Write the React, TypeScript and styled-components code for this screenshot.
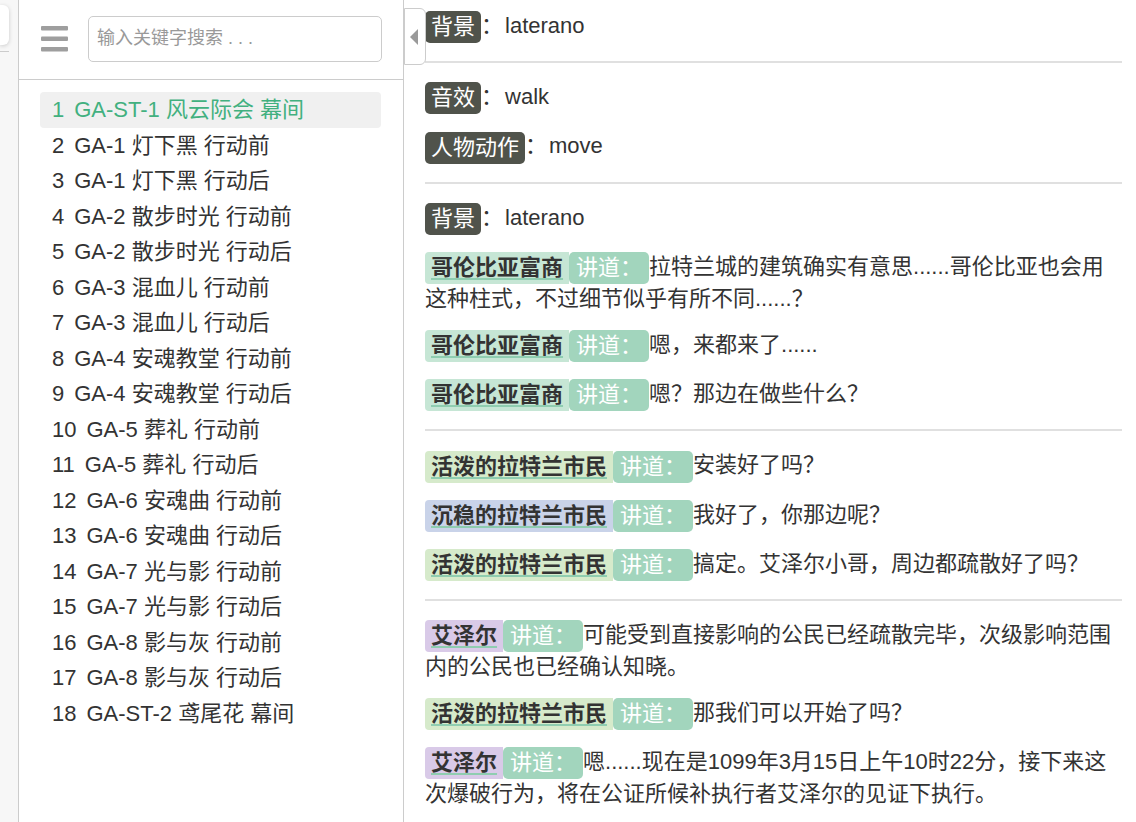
import React from 'react';
import styled, { createGlobalStyle } from 'styled-components';

type Line =
  | { kind: 'meta'; label: string; value: string }
  | { kind: 'talk'; name: string; tone: Tone; text: string };

type Tone = 'mint' | 'lime' | 'blue' | 'purple';

const chapters = [
  'GA-ST-1 风云际会 幕间',
  'GA-1 灯下黑 行动前',
  'GA-1 灯下黑 行动后',
  'GA-2 散步时光 行动前',
  'GA-2 散步时光 行动后',
  'GA-3 混血儿 行动前',
  'GA-3 混血儿 行动后',
  'GA-4 安魂教堂 行动前',
  'GA-4 安魂教堂 行动后',
  'GA-5 葬礼 行动前',
  'GA-5 葬礼 行动后',
  'GA-6 安魂曲 行动前',
  'GA-6 安魂曲 行动后',
  'GA-7 光与影 行动前',
  'GA-7 光与影 行动后',
  'GA-8 影与灰 行动前',
  'GA-8 影与灰 行动后',
  'GA-ST-2 鸢尾花 幕间',
];

const sections: Line[][] = [
  [{ kind: 'meta', label: '背景', value: 'laterano' }],
  [
    { kind: 'meta', label: '音效', value: 'walk' },
    { kind: 'meta', label: '人物动作', value: 'move' },
  ],
  [
    { kind: 'meta', label: '背景', value: 'laterano' },
    { kind: 'talk', name: '哥伦比亚富商', tone: 'mint', text: '拉特兰城的建筑确实有意思......哥伦比亚也会用这种柱式，不过细节似乎有所不同......？' },
    { kind: 'talk', name: '哥伦比亚富商', tone: 'mint', text: '嗯，来都来了......' },
    { kind: 'talk', name: '哥伦比亚富商', tone: 'mint', text: '嗯？那边在做些什么？' },
  ],
  [
    { kind: 'talk', name: '活泼的拉特兰市民', tone: 'lime', text: '安装好了吗？' },
    { kind: 'talk', name: '沉稳的拉特兰市民', tone: 'blue', text: '我好了，你那边呢？' },
    { kind: 'talk', name: '活泼的拉特兰市民', tone: 'lime', text: '搞定。艾泽尔小哥，周边都疏散好了吗？' },
  ],
  [
    { kind: 'talk', name: '艾泽尔', tone: 'purple', text: '可能受到直接影响的公民已经疏散完毕，次级影响范围内的公民也已经确认知晓。' },
    { kind: 'talk', name: '活泼的拉特兰市民', tone: 'lime', text: '那我们可以开始了吗？' },
    { kind: 'talk', name: '艾泽尔', tone: 'purple', text: '嗯......现在是1099年3月15日上午10时22分，接下来这次爆破行为，将在公证所候补执行者艾泽尔的见证下执行。' },
  ],
];

const toneColors: Record<Tone, string> = {
  mint: '#c6e6d5',
  lime: '#d6eacb',
  blue: '#c9d3e9',
  purple: '#d9cae8',
};

const GlobalStyle = createGlobalStyle`
  html, body {
    margin: 0;
    height: 100%;
    overflow: hidden;
    background: #fff;
    font-family: "Liberation Sans", "Noto Sans CJK SC", sans-serif;
    color: #333;
  }
`;

const Page = styled.div`
  display: flex;
  height: 100vh;
`;

const Rail = styled.div`
  width: 18px;
  flex-shrink: 0;
  background: #f7f7f7;
  border-right: 1px solid #ccc;
  display: flex;
  flex-direction: column;
`;

const RailTab = styled.div`
  width: 9px;
  height: 40px;
  margin-top: 5px;
  background: #fff;
  border-radius: 0 6px 6px 0;
  box-shadow: 0 1px 4px rgba(0, 0, 0, 0.18);
`;

const RailRule = styled.div`
  width: 9px;
  margin-top: 6px;
  border-top: 1px solid #ccc;
`;

const Sidebar = styled.aside`
  width: 384px;
  flex-shrink: 0;
  border-right: 1px solid #ccc;
  display: flex;
  flex-direction: column;
`;

const SideHeader = styled.div`
  height: 80px;
  box-sizing: border-box;
  border-bottom: 1px solid #ccc;
  display: flex;
  align-items: center;
  padding: 0 21px 0 22px;
  gap: 20px;
`;

const MenuButton = styled.div`
  width: 27px;
  height: 27px;
  display: flex;
  align-items: center;
  flex-shrink: 0;
`;

const Search = styled.input`
  flex: 1;
  height: 46px;
  box-sizing: border-box;
  border: 1px solid #ccc;
  border-radius: 5px;
  padding: 0 8px;
  font-size: 18px;
  font-family: inherit;
  color: #333;
  outline: none;
  margin-top: -2px;

  &::placeholder {
    color: #999;
  }
`;

const List = styled.ul`
  list-style: none;
  margin: 0;
  padding: 12px 22px 0 21px;
`;

const Item = styled.li<{ $active?: boolean }>`
  height: 35.5px;
  line-height: 35.5px;
  padding-left: 12px;
  border-radius: 4px;
  font-size: 22px;
  white-space: nowrap;
  color: ${p => (p.$active ? '#42b07f' : '#333')};
  background: ${p => (p.$active ? '#f0f0f0' : 'transparent')};
`;

const Num = styled.span`
  margin-right: 10px;
`;

const Main = styled.main`
  flex: 1;
  position: relative;
  min-width: 0;
`;

const Collapse = styled.div`
  position: absolute;
  left: 0;
  top: 8px;
  width: 20px;
  height: 55px;
  background: #fff;
  border: 1px solid #ccc;
  border-radius: 0 6px 6px 0;
  display: flex;
  align-items: center;
  justify-content: center;
`;

const Arrow = styled.div`
  width: 0;
  height: 0;
  border-top: 8px solid transparent;
  border-bottom: 8px solid transparent;
  border-right: 8px solid #9a9a9a;
  margin-right: 2px;
`;

const Content = styled.div`
  padding: 0 14px 0 21px;
`;

const Section = styled.section<{ $first?: boolean }>`
  display: flex;
  flex-direction: column;
  gap: 17px;
  padding: ${p => (p.$first ? '11px' : '19px')} 0 18px;
  border-bottom: 2px solid #e0e0e0;
`;

const Entry = styled.p`
  margin: 0;
  font-size: 22px;
  line-height: 29px;
  color: #333;
`;

const Label = styled.span`
  display: inline-block;
  height: 32px;
  line-height: 32px;
  padding: 0 6px;
  border-radius: 5px;
  background: #50534b;
  color: #fff;
  vertical-align: middle;
`;

const Colon = styled.span`
  margin-right: 2px;
`;

const Name = styled.span<{ $tone: Tone }>`
  display: inline-block;
  height: 32px;
  line-height: 31px;
  padding: 0 6px;
  border-radius: 4px 0 0 4px;
  background: ${p => toneColors[p.$tone]};
  font-weight: bold;
  color: #333;
  vertical-align: middle;
  text-decoration: underline;
  text-decoration-color: #8fcdb0;
  text-decoration-thickness: 2px;
  text-underline-offset: 3px;
`;

const Speak = styled.span`
  display: inline-block;
  width: 80px;
  box-sizing: border-box;
  height: 32px;
  line-height: 32px;
  padding: 0 7px;
  border-radius: 5px;
  background: #a2d5bd;
  color: #fff;
  vertical-align: middle;
`;

const MenuIcon = () => (
  <svg width="27" height="27" viewBox="0 0 27 27">
    <rect x="0" y="0" width="27" height="4.5" rx="1" fill="#9e9e9e" />
    <rect x="0" y="10.5" width="27" height="4.5" rx="1" fill="#9e9e9e" />
    <rect x="0" y="21" width="27" height="4.5" rx="1" fill="#9e9e9e" />
  </svg>
);

export default function App() {
  return (
    <>
      <GlobalStyle />
      <Page>
        <Rail>
          <RailTab />
          <RailRule />
        </Rail>
        <Sidebar>
          <SideHeader>
            <MenuButton>
              <MenuIcon />
            </MenuButton>
            <Search placeholder="输入关键字搜索 . . ." />
          </SideHeader>
          <List>
            {chapters.map((c, i) => (
              <Item key={i} $active={i === 0}>
                <Num>{i + 1}</Num>
                {c}
              </Item>
            ))}
          </List>
        </Sidebar>
        <Main>
          <Collapse>
            <Arrow />
          </Collapse>
          <Content>
            {sections.map((lines, si) => (
              <Section key={si} $first={si === 0}>
                {lines.map((l, li) =>
                  l.kind === 'meta' ? (
                    <Entry key={li}>
                      <Label>{l.label}</Label>
                      <Colon>：</Colon>
                      {l.value}
                    </Entry>
                  ) : (
                    <Entry key={li}>
                      <Name $tone={l.tone}>{l.name}</Name>
                      <Speak>讲道：</Speak>
                      {l.text}
                    </Entry>
                  )
                )}
              </Section>
            ))}
          </Content>
        </Main>
      </Page>
    </>
  );
}
